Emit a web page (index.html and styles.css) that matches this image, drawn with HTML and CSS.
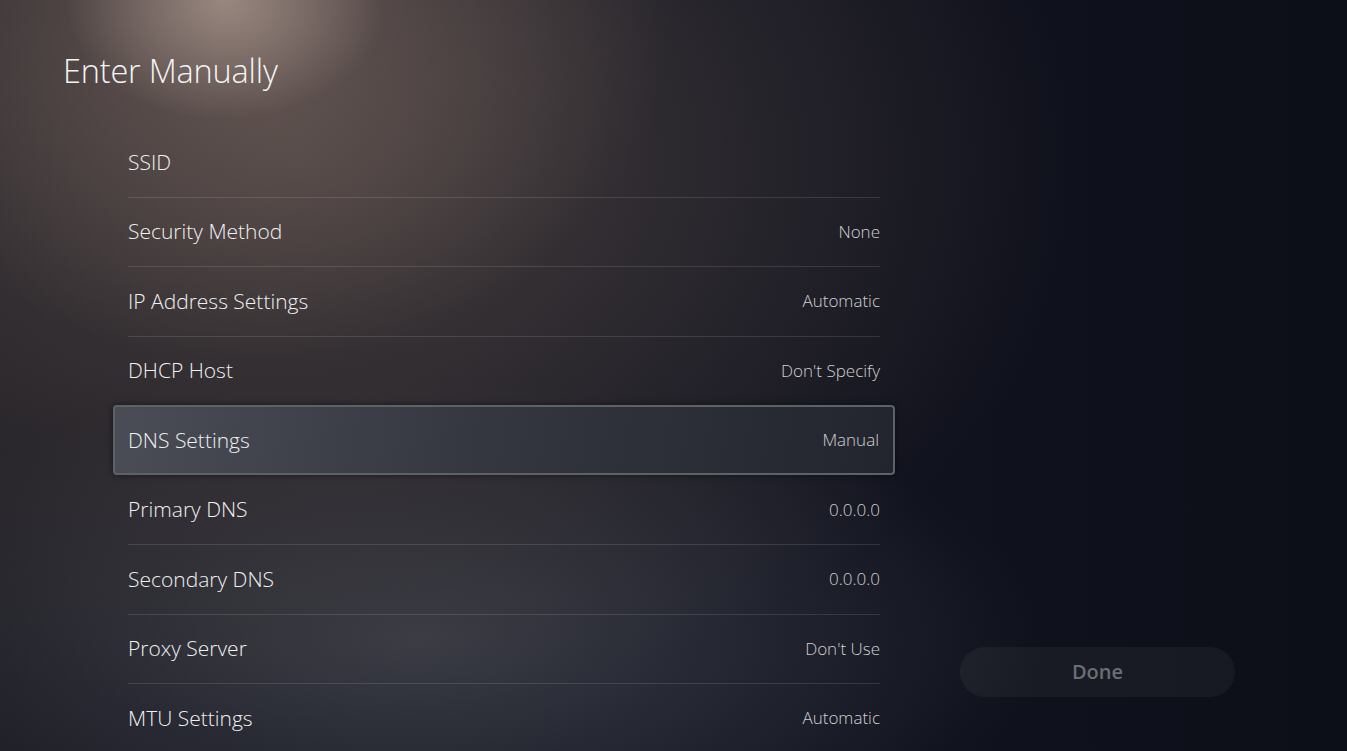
FILE: index.html
```html
<!DOCTYPE html>
<html lang="en">
<head>
  <meta charset="UTF-8">
  <meta name="viewport" content="width=device-width, initial-scale=1.0">
  <title>Enter Manually</title>
  <link rel="stylesheet" href="styles.css">
</head>
<body>
  <div class="screen">
    <h1 class="title">Enter Manually</h1>
    <div class="content">
      <ul class="settings">
        <li class="row"><span class="label">SSID</span></li>
        <li class="row"><span class="label">Security Method</span><span class="value">None</span></li>
        <li class="row"><span class="label">IP Address Settings</span><span class="value">Automatic</span></li>
        <li class="row"><span class="label">DHCP Host</span><span class="value">Don't Specify</span></li>
        <li class="row selected"><span class="label">DNS Settings</span><span class="value">Manual</span></li>
        <li class="row"><span class="label">Primary DNS</span><span class="value">0.0.0.0</span></li>
        <li class="row"><span class="label">Secondary DNS</span><span class="value">0.0.0.0</span></li>
        <li class="row"><span class="label">Proxy Server</span><span class="value">Don't Use</span></li>
        <li class="row"><span class="label">MTU Settings</span><span class="value">Automatic</span></li>
      </ul>
      <div class="actions">
        <button class="done">Done</button>
      </div>
    </div>
  </div>
</body>
</html>
```

FILE: styles.css
```css
html, body {
  margin: 0;
  height: 100%;
}

body {
  font-family: 'Open Sans', 'Noto Sans', sans-serif;
  color: #f2f2f2;
  background-color: #0e1019;
  background-image:
    radial-gradient(ellipse 160px 120px at 225px 0, rgba(178, 158, 148, 0.7), rgba(178, 158, 148, 0) 100%),
    radial-gradient(ellipse 420px 330px at 250px 30px, rgba(120, 102, 96, 0.65), rgba(120, 102, 96, 0) 100%),
    radial-gradient(ellipse 780px 560px at 300px 160px, rgba(78, 68, 66, 0.85), rgba(78, 68, 66, 0) 100%),
    radial-gradient(ellipse 620px 260px at 420px 640px, rgba(72, 75, 84, 0.7), rgba(72, 75, 84, 0) 100%),
    linear-gradient(90deg, #1a1a22 0%, #121420 50%, #0c0e18 100%);
  overflow: hidden;
}

.screen {
  height: 100%;
  padding: 0 0 0 63px;
  box-sizing: border-box;
}

.title {
  margin: 0;
  padding-top: 50px;
  font-size: 32.5px;
  font-weight: 300;
  line-height: 42px;
  letter-spacing: -0.2px;
  color: #f4f4f4;
}

.content {
  display: flex;
  align-items: flex-end;
  margin-top: 35px;
}

.settings {
  list-style: none;
  margin: 0 0 0 50px;
  padding: 0;
  width: 782px;
}

.row {
  position: relative;
  display: flex;
  justify-content: space-between;
  align-items: center;
  height: 69.5px;
  padding: 0 15px 0 15px;
  box-sizing: border-box;
}

.row + .row::before {
  content: "";
  position: absolute;
  left: 15px;
  right: 15px;
  top: 0;
  height: 1px;
  background: rgba(255, 255, 255, 0.12);
}

.label {
  font-size: 21px;
  font-weight: 300;
  color: #f0f0f0;
}

.value {
  font-size: 17px;
  font-weight: 300;
  color: #cfd0d2;
}

.selected {
  border: 2px solid #5d6168;
  border-radius: 4px;
  background: linear-gradient(100deg, #4a4d55 0%, #33363e 50%, #23252e 100%);
  box-shadow: 0 0 6px rgba(0, 0, 0, 0.5);
  padding: 0 14px 0 13px;
}

.selected::before,
.selected + .row::before {
  display: none;
}

.actions {
  margin-left: 65px;
  margin-bottom: 56px;
}

.done {
  width: 275px;
  height: 50px;
  border: none;
  border-radius: 25px;
  background: rgba(255, 255, 255, 0.045);
  color: #6c6e74;
  font-family: 'Open Sans', 'Noto Sans', sans-serif;
  font-size: 20px;
  font-weight: 600;
}
```
